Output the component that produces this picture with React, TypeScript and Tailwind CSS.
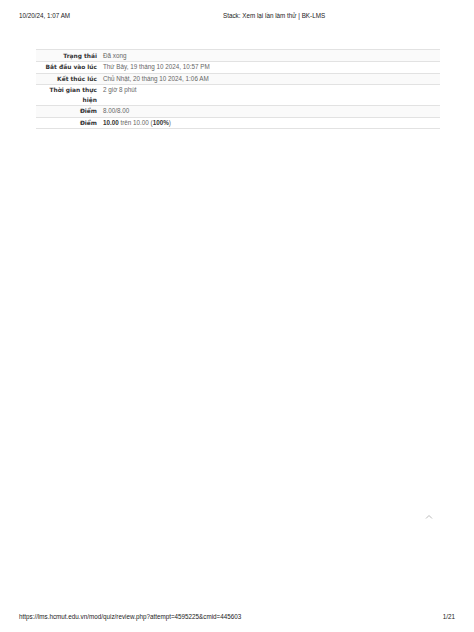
import React from "react";

const rows: { label: string; value: React.ReactNode }[] = [
  { label: "Trạng thái", value: "Đã xong" },
  { label: "Bắt đầu vào lúc", value: "Thứ Bảy, 19 tháng 10 2024, 10:57 PM" },
  { label: "Kết thúc lúc", value: "Chủ Nhật, 20 tháng 10 2024, 1:06 AM" },
  { label: "Thời gian thực hiện", value: "2 giờ 8 phút" },
  { label: "Điểm", value: "8.00/8.00" },
  {
    label: "Điểm",
    value: (
      <>
        <b className="font-bold text-[#333]">10.00</b> trên 10.00 (<b className="font-bold text-[#333]">100%</b>)
      </>
    ),
  },
];

export default function App() {
  return (
    <div
      className="w-[474px] h-[632px] bg-white flex flex-col relative"
      style={{ fontFamily: '"Liberation Sans", Arial, sans-serif' }}
    >
      <div className="flex items-center h-[31px] pl-[19px] pr-[19px] text-[6.3px] text-[#222]">
        <div className="w-[204px]">10/20/24, 1:07 AM</div>
        <div>Stack: Xem lại lần làm thử | BK-LMS</div>
      </div>

      <div className="ml-[36px] mr-[34px] mt-[18px] border-b border-[#e2e2e2]">
        {rows.map((r, i) => (
          <div
            key={i}
            className={`flex border-t border-[#e2e2e2] leading-[10.3px] ${
              i % 2 === 0 ? "bg-[#fafafa]" : "bg-white"
            } ${i === 0 ? "pt-[1px]" : ""}`}
          >
            <div
              className="w-[63px] shrink-0 pr-[2px] text-right font-bold text-[5.9px] text-[#333]"
              style={{ fontFamily: '"DejaVu Sans", sans-serif' }}
            >
              {r.label}
            </div>
            <div className="pl-[4px] text-[6.3px] text-[#666]">{r.value}</div>
          </div>
        ))}
      </div>

      <div className="flex-1 relative">
        <svg
          className="absolute left-[425px] top-[385px]"
          width="8"
          height="6"
          viewBox="0 0 8 6"
        >
          <path d="M1 4.5 L4 1.5 L7 4.5" fill="none" stroke="#bbb" strokeWidth="1" />
        </svg>
      </div>

      <div className="flex items-center justify-between h-[31px] pl-[19px] pr-[19px] text-[6.3px] text-[#222]">
        <div>https://lms.hcmut.edu.vn/mod/quiz/review.php?attempt=4595225&amp;cmid=445603</div>
        <div>1/21</div>
      </div>
    </div>
  );
}
